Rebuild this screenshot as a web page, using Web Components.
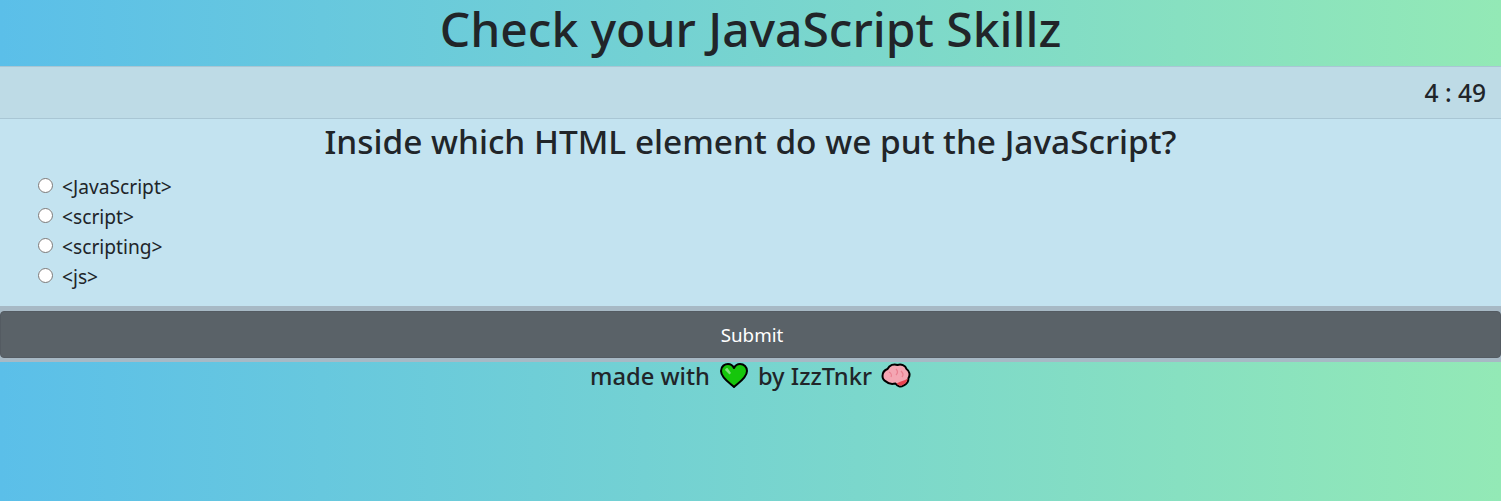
<!DOCTYPE html>
<html lang="en">
<head>
<meta charset="utf-8">
<title>Check your JavaScript Skillz</title>
<style>
html, body { margin: 0; min-height: 501px; }
body {
  background: linear-gradient(to right, #5bbfe9, #93e9b6);
  font-family: "Noto Sans", "Open Sans", sans-serif;
  color: #212529;
  overflow: hidden;
}
</style>
</head>
<body>
<quiz-title>Check your JavaScript Skillz</quiz-title>
<quiz-card>
  <quiz-timer slot="timer">4 : 49</quiz-timer>
  <quiz-question question="Inside which HTML element do we put the JavaScript?">
    <quiz-option>&lt;JavaScript&gt;</quiz-option>
    <quiz-option>&lt;script&gt;</quiz-option>
    <quiz-option>&lt;scripting&gt;</quiz-option>
    <quiz-option>&lt;js&gt;</quiz-option>
  </quiz-question>
  <quiz-submit slot="footer">Submit</quiz-submit>
</quiz-card>
<quiz-footer></quiz-footer>

<script>
// page heading
class QuizTitle extends HTMLElement {
  constructor() {
    super();
    this.attachShadow({ mode: "open" }).innerHTML = `
    <style>
      :host { display: block; height: 66px; text-align: center; }
      h1 { margin: 0; font-size: 48px; font-weight: 500; line-height: 57px; }
    </style>
    <h1><slot></slot></h1>`;
  }
}

// card with header, body and footer
class QuizCard extends HTMLElement {
  constructor() {
    super();
    this.attachShadow({ mode: "open" }).innerHTML = `
    <style>
      :host { display: block; background: #c3e3f0; }
      .head {
        display: flex; justify-content: flex-end; align-items: center;
        height: 51px; padding: 0 15px;
        background: #bedbe6;
        border-top: 1px solid #a9c6d4;
        border-bottom: 1px solid #a9c6d4;
      }
      .foot { background: #a7b9c5; padding: 5px 0 4px; }
    </style>
    <div class="head"><slot name="timer"></slot></div>
    <slot></slot>
    <div class="foot"><slot name="footer"></slot></div>`;
  }
}

class QuizTimer extends HTMLElement {
  constructor() {
    super();
    this.attachShadow({ mode: "open" }).innerHTML = `
    <style>
      :host { display: block; font-size: 24.500px; font-weight: 500; }
    </style>
    <slot></slot>`;
  }
}

// question text and its list of answers
class QuizQuestion extends HTMLElement {
  constructor() {
    super();
    this.attachShadow({ mode: "open" }).innerHTML = `
    <style>
      :host { display: block; height: 187px; }
      h3 {
        margin: 0; padding-top: 3px; text-align: center;
        font-size: 33.400px; font-weight: 500; line-height: 38px;
      }
      .list { display: grid; grid-auto-rows: 30px; padding: 11px 38px 0; }
    </style>
    <h3></h3>
    <div class="list"><slot></slot></div>`;
    this.shadowRoot.querySelector("h3").textContent = this.getAttribute("question");
  }
}

class QuizOption extends HTMLElement {
  constructor() {
    super();
    this.attachShadow({ mode: "open" }).innerHTML = `
    <style>
      :host { display: flex; align-items: center; gap: 9px; font-size: 19.200px; font-weight: 400; }
      input { margin: 0 0 2px; width: 15px; height: 15px; }
    </style>
    <input type="radio" name="answer"><label><slot></slot></label>`;
  }
}

class QuizSubmit extends HTMLElement {
  constructor() {
    super();
    this.attachShadow({ mode: "open" }).innerHTML = `
    <style>
      :host { display: block; }
      button {
        display: block; width: 100%; height: 47px; padding: 0 0 0 3px;
        background: #5a6268; color: #fff;
        border: 1px solid #545b62; border-radius: 4px;
        font: 400 18.800px "Noto Sans", "Open Sans", sans-serif;
      }
    </style>
    <button><slot></slot></button>`;
  }
}

// credit line with the two pixel style emoji
class QuizFooter extends HTMLElement {
  constructor() {
    super();
    this.attachShadow({ mode: "open" }).innerHTML = `
    <style>
      :host {
        display: flex; justify-content: center; align-items: center; gap: 9px;
        height: 27px; font-size: 23.700px; font-weight: 500;
      }
      svg { display: block; }
    </style>
    <span>made with</span>
    <svg width="30" height="28" viewBox="0 0 30 28">
      <path d="M15 25 C12 22 2 16 2 9 C2 4 6 2 9 2 C12 2 14 4 15 6 C16 4 18 2 21 2 C25 2 28 5 28 9 C28 16 18 22 15 25 Z" fill="#16c60c" stroke="#000" stroke-width="2" stroke-linejoin="round"/>
      <path d="M6 8 C6.500 6.500 7.500 6 8.500 6 L12 11 L10.500 12.500 Z" fill="#7fe07a"/>
    </svg>
    <span>by IzzTnkr</span>
    <svg width="30" height="27" viewBox="0 0 30 27">
      <path d="M1.500 14 C1.500 10 4 8 6.500 7 C8.500 3 13 1.500 16.500 3 C20 1.500 24.500 3.500 25.500 7 C28.500 9 29.500 13 27.500 16 C27.500 20 25 22.500 22.500 23.500 C19.500 25.500 16.500 24.500 14.500 21.500 C10.500 22.500 7 21.500 5 19.500 C3 18.500 1.500 16.500 1.500 14 Z" fill="#f4a6b3" stroke="#000" stroke-width="2" stroke-linejoin="round"/>
      <path d="M15.500 21.500 C18 24 20.500 24 22.500 22.500 C25 21.500 26.500 19 26.500 16.500 C23.500 19 19.500 19 15.500 21.500 Z" fill="#e8434f"/>
      <path d="M8 10 C10 11 11 13 10 15 M15 7 C17 9 17 11 15 13 M20 9 C22 11 23 13 21 15" fill="none" stroke="#e97f90" stroke-width="1.200"/>
    </svg>`;
  }
}

customElements.define("quiz-title", QuizTitle);
customElements.define("quiz-card", QuizCard);
customElements.define("quiz-timer", QuizTimer);
customElements.define("quiz-question", QuizQuestion);
customElements.define("quiz-option", QuizOption);
customElements.define("quiz-submit", QuizSubmit);
customElements.define("quiz-footer", QuizFooter);
</script>
</body>
</html>
